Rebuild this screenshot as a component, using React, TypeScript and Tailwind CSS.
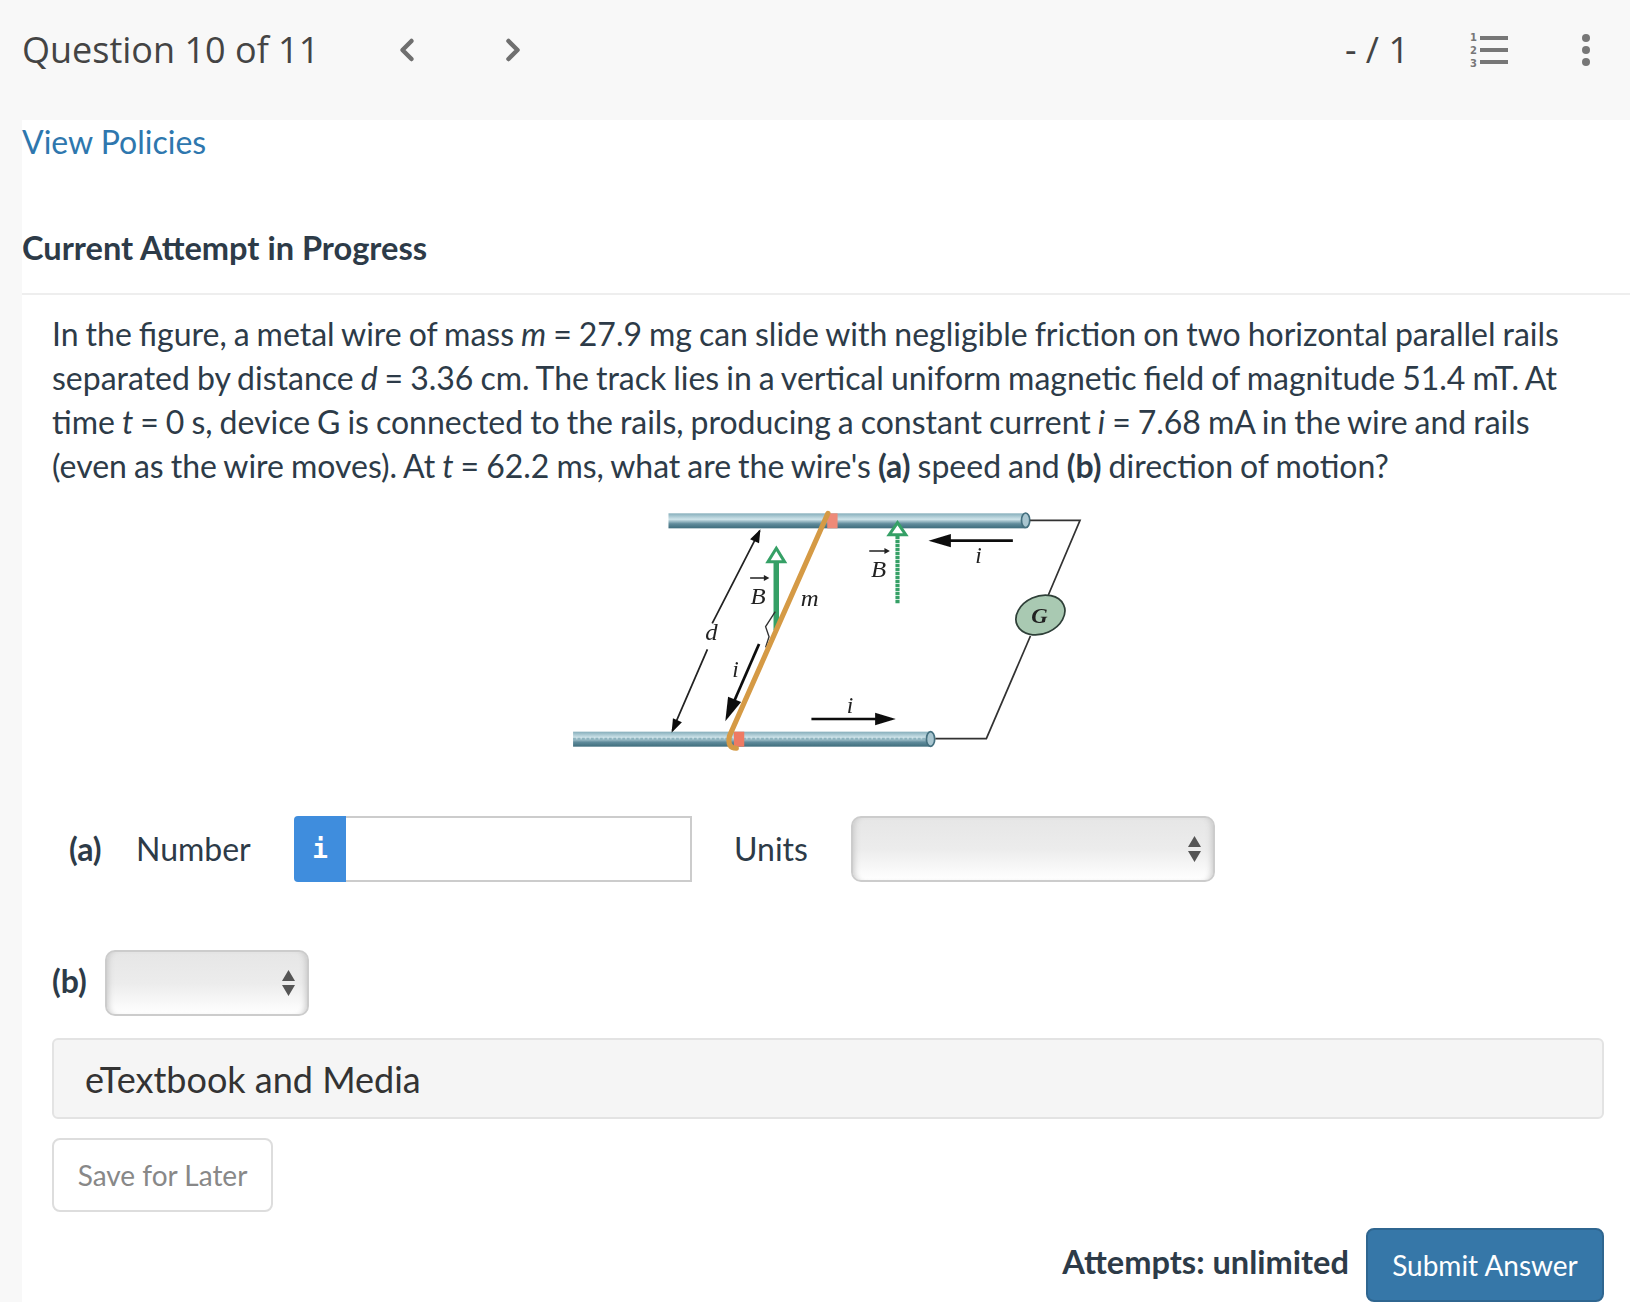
import { ChevronLeft, ChevronRight } from "lucide-react";

const Updown = () => (
  <svg width="13" height="26" viewBox="0 0 13 26" className="shrink-0">
    <path d="M6.5 0L13 11H0Z M0 15H13L6.5 26Z" fill="#555" />
  </svg>
);

const Select = ({ className }: { className: string }) => (
  <div
    className={`flex items-center justify-end pr-[12px] h-[66px] rounded-[10px] border-2 border-[#ccc] bg-gradient-to-b from-[#e6e6e6] via-[#ececec] to-white shadow-[inset_6px_0_6px_-5px_#c4c4c4,inset_-6px_0_6px_-5px_#c4c4c4] ${className}`}
  >
    <Updown />
  </div>
);

const Figure = () => (
  <svg width="540" height="260" viewBox="0 0 1568 780" preserveAspectRatio="none" className="mt-[12px] ml-[508px] block">
    <defs>
      <linearGradient id="rail" x1="0" y1="0" x2="0" y2="1">
        <stop offset="0" stopColor="#86aebb" />
        <stop offset="0.4" stopColor="#cfe4ea" />
        <stop offset="0.7" stopColor="#5f8b9b" />
        <stop offset="1" stopColor="#3f6c7c" />
      </linearGradient>
      <filter id="soft" x="-5%" y="-5%" width="110%" height="110%">
        <feGaussianBlur stdDeviation="2.2" />
      </filter>
    </defs>
    <g filter="url(#soft)">
      {/* rails */}
      <rect x="315" y="40" width="1035" height="45" fill="url(#rail)" />
      <ellipse cx="1352" cy="61" rx="12" ry="22" fill="#a9c6d0" stroke="#44707f" strokeWidth="5" />
      <rect x="38" y="695" width="1040" height="45" fill="url(#rail)" />
      <path d="M38 717H1060" stroke="#8fb4bf" strokeWidth="8" strokeDasharray="8 5" />
      <ellipse cx="1076" cy="717" rx="12" ry="22" fill="#a9c6d0" stroke="#44707f" strokeWidth="5" />
      <rect x="776" y="40" width="30" height="45" fill="#ee8a78" />
      <rect x="505" y="695" width="30" height="45" fill="#ee7a64" />

      {/* circuit */}
      <path d="M1365 61H1510L1418 285" fill="none" stroke="#333" strokeWidth="5" />
      <path d="M1366 408L1238 716H1090" fill="none" stroke="#333" strokeWidth="5" />
      <ellipse cx="1395" cy="345" rx="74" ry="56" transform="rotate(-25 1395 345)" fill="#a9c9b2" stroke="#2f3f38" strokeWidth="5" />
      <text x="1392" y="368" textAnchor="middle" fontFamily="'Liberation Serif', serif" fontStyle="italic" fontWeight="700" fontSize="66" fill="#222">G</text>

      {/* green B arrows */}
      <path d="M628 390V185" stroke="#36a066" strokeWidth="16" />
      <path d="M628 145L652 185H604Z" fill="#fff" stroke="#36a066" strokeWidth="9" />
      <path d="M980 310V105" stroke="#36a066" strokeWidth="12" strokeDasharray="10 2" />
      <path d="M980 68L1004 104H956Z" fill="#fff" stroke="#36a066" strokeWidth="9" />

      {/* sliding wire */}
      <path d="M625 335L597 380L607 410L597 442" fill="none" stroke="#333" strokeWidth="4" />
      <path d="M778 40L492 708Q485 745 512 745" fill="none" stroke="#d59a45" strokeWidth="15" strokeLinecap="round" />

      {/* separation d */}
      <path d="M580 92L442 370M428 448L326 692" fill="none" stroke="#222" strokeWidth="5" />
      <path d="M582 88L578 130L552 118Z M324 698L328 655L354 667Z" fill="#111" />

      {/* current arrows */}
      <path d="M1315 122H1120" stroke="#111" strokeWidth="8" />
      <path d="M1070 122L1135 102V142Z" fill="#111" />
      <path d="M578 432L505 605" stroke="#111" strokeWidth="8" />
      <path d="M480 664L488 590L526 606Z" fill="#111" />
      <path d="M730 657H920" stroke="#111" strokeWidth="8" />
      <path d="M975 657L915 638V676Z" fill="#111" />

      <g fontFamily="'Liberation Serif', serif" fontStyle="italic" fill="#222">
        <text x="1215" y="190" textAnchor="middle" fontSize="68">i</text>
        <text x="510" y="530" textAnchor="middle" fontSize="68">i</text>
        <text x="842" y="640" textAnchor="middle" fontSize="68">i</text>
        <text x="440" y="420" textAnchor="middle" fontSize="72">d</text>
        <text x="725" y="318" textAnchor="middle" fontSize="72">m</text>
        <text x="575" y="312" textAnchor="middle" fontSize="72">B</text>
        <text x="925" y="232" textAnchor="middle" fontSize="72">B</text>
      </g>
      <path d="M552 234H600M898 153H950" stroke="#222" strokeWidth="4" />
      <path d="M608 234L592 225V243Z M958 153L942 144V162Z" fill="#222" />
    </g>
  </svg>
);

export default function App() {
  return (
    <div className="w-[1630px] h-[1302px] overflow-hidden bg-white font-['Lato','Liberation_Sans',sans-serif] text-[#2d3b48]">
      {/* top bar */}
      <div className="flex items-center h-[120px] pb-[20px] bg-[#f8f8f8] pl-[22px] font-['Open_Sans',sans-serif] text-[#444]">
        <span className="text-[36px] leading-[100px] w-[367px]">Question 10 of 11</span>
        <ChevronLeft className="w-[36px] h-[36px] text-[#6f6f6f]" strokeWidth={3} />
        <ChevronRight className="w-[36px] h-[36px] ml-[70px] text-[#6f6f6f]" strokeWidth={3} />
        <span className="ml-auto text-[36px] leading-[100px]">- / 1</span>
        <svg width="38" height="36" viewBox="0 0 38 36" className="ml-[61px]">
          <path d="M10 6H38M10 18H38M10 30H38" stroke="#777" strokeWidth="4" />
          <g fontFamily="'DejaVu Sans', sans-serif" fontWeight="700" fontSize="10" fill="#777">
            <text x="0" y="9">1</text>
            <text x="0" y="22">2</text>
            <text x="0" y="35">3</text>
          </g>
        </svg>
        <svg width="8" height="32" viewBox="0 0 8 32" className="ml-[74px] mr-[40px]">
          <circle cx="4" cy="4" r="4" fill="#777" />
          <circle cx="4" cy="16" r="4" fill="#777" />
          <circle cx="4" cy="28" r="4" fill="#777" />
        </svg>
      </div>

      <div className="flex h-[1182px]">
        <div className="w-[22px] shrink-0 bg-[#f8f8f8]" />
        <div className="flex-1 min-w-0">
          <a className="block text-[32px] leading-[44px] text-[#2e77ae]">View Policies</a>
          <h2 className="mt-[62px] text-[32.6px] leading-[44px] font-bold pb-[23px] border-b-2 border-[#eee]">Current Attempt in Progress</h2>

          <div className="pl-[30px] pr-[26px]">
            <p className="mt-[17px] text-[32px] leading-[44px] [word-spacing:-1.2px]">
              In the figure, a metal wire of mass <i>m</i> = 27.9 mg can slide with negligible friction on two horizontal parallel rails
              separated by distance <i>d</i> = 3.36 cm. The track lies in a vertical uniform magnetic field of magnitude 51.4 mT. At
              time <i>t</i> = 0 s, device G is connected to the rails, producing a constant current <i>i</i> = 7.68 mA in the wire and rails
              (even as the wire moves). At <i>t</i> = 62.2 ms, what are the wire's <b>(a)</b> speed and <b>(b)</b> direction of motion?
            </p>

            <Figure />

            {/* part a */}
            <div className="flex items-center mt-[56px] h-[66px] text-[32px]">
              <b className="ml-[17px] w-[67px]">(a)</b>
              <span className="w-[158px]">Number</span>
              <div className="flex items-center justify-center w-[52px] h-[66px] rounded-l-[4px] bg-[#3f8ddd] text-white font-['DejaVu_Sans_Mono',monospace] font-bold text-[26px]">i</div>
              <div className="w-[346px] h-[66px] border-2 border-l-0 border-[#ccc]" />
              <span className="ml-[42px] w-[117px]">Units</span>
              <Select className="w-[364px]" />
            </div>

            {/* part b */}
            <div className="flex items-center mt-[68px] text-[32px]">
              <b className="w-[53px] -mt-[5px]">(b)</b>
              <Select className="w-[204px]" />
            </div>

            <div className="flex items-center mt-[22px] h-[81px] pl-[31px] rounded-[6px] border-2 border-[#e3e3e3] bg-[#f5f5f5] text-[36px] text-[#333]">
              eTextbook and Media
            </div>

            <button className="block mt-[19px] w-[221px] h-[74px] rounded-[8px] border-2 border-[#ddd] bg-white text-[28px] text-[#888]">Save for Later</button>

            <div className="flex items-center justify-end mt-[16px]">
              <span className="text-[32.6px] font-bold mr-[17px] -mt-[6px]">Attempts: unlimited</span>
              <button className="w-[238px] h-[74px] rounded-[8px] border-2 border-[#2f6690] bg-[#3677a8] text-[28px] text-white">Submit Answer</button>
            </div>
          </div>
        </div>
      </div>
    </div>
  );
}
